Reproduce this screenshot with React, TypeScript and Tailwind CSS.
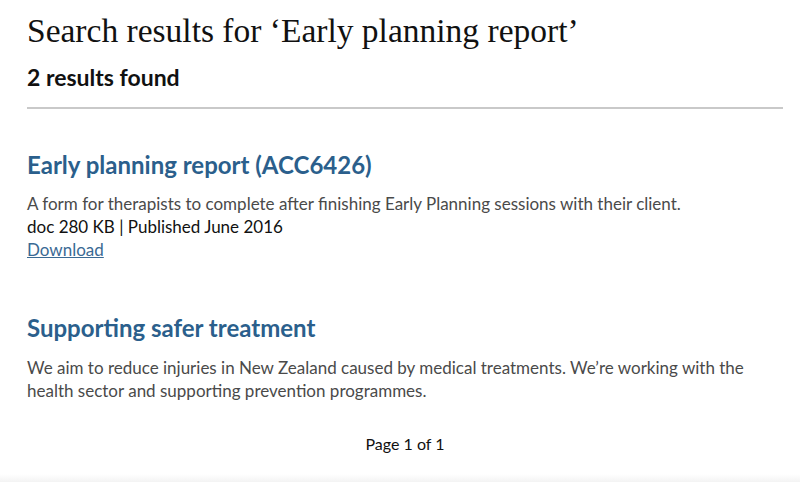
import React from "react";

export default function App() {
  const sans = { fontFamily: "Lato, 'Open Sans', sans-serif" } as React.CSSProperties;
  return (
    <div className="w-[800px] h-[482px] bg-white relative overflow-hidden">
      <div className="px-[27px] pt-[11px]" style={sans}>
        <h1 className="text-[33.5px] leading-[40px] text-[#111] font-['Liberation_Serif',serif] whitespace-nowrap">
          Search results for ‘Early planning report’
        </h1>
        <p className="mt-[12px] text-[23px] leading-[28px] font-bold text-[#111]">2 results found</p>
        <div className="mt-[16px] h-[2px] w-[756px] bg-[#c9c9c9]" />

        <div className="mt-[41px]">
          <h2 className="text-[24px] leading-[30px] font-bold text-[#2b5f8c]">Early planning report (ACC6426)</h2>
          <p className="mt-[12px] text-[17px] leading-[23px] text-[#4a4a4a]">
            A form for therapists to complete after finishing Early Planning sessions with their client.
          </p>
          <p className="text-[17px] leading-[23px] text-[#111]">doc 280 KB | Published June 2016</p>
          <a href="#" className="block w-fit text-[17px] leading-[23px] text-[#3a6a94] underline">Download</a>
        </div>

        <div className="mt-[52px]">
          <h2 className="text-[24px] leading-[30px] font-bold text-[#2b5f8c]">Supporting safer treatment</h2>
          <p className="mt-[13px] text-[17px] leading-[23px] text-[#4a4a4a] w-[728px]">
            We aim to reduce injuries in New Zealand caused by medical treatments. We’re working with the health sector and supporting prevention programmes.
          </p>
        </div>

        <p className="mt-[30px] pl-[10px] text-center text-[16px] leading-[23px] text-[#111]">Page 1 of 1</p>
      </div>
      <div className="absolute bottom-0 left-0 right-0 h-[8px] bg-gradient-to-b from-white to-[#f3f3f3]" />
    </div>
  );
}
